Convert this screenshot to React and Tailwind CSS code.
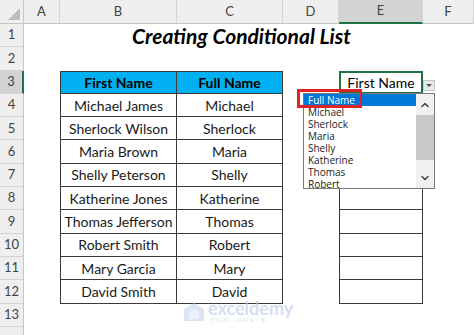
import { ChevronUp, ChevronDown } from 'lucide-react'

const people = [
  ['Michael James', 'Michael'],
  ['Sherlock Wilson', 'Sherlock'],
  ['Maria Brown', 'Maria'],
  ['Shelly Peterson', 'Shelly'],
  ['Katherine Jones', 'Katherine'],
  ['Thomas Jefferson', 'Thomas'],
  ['Robert Smith', 'Robert'],
  ['Mary Garcia', 'Mary'],
  ['David Smith', 'David'],
]

const listItems = ['Michael', 'Sherlock', 'Maria', 'Shelly', 'Katherine', 'Thomas', 'Robert']

const font = { fontFamily: 'Lato, "Open Sans", sans-serif' }

function RowHead({ n, active }) {
  return (
    <div
      className={`flex items-center justify-center border-b border-[#d4d4d4] text-[13px] text-[#444] ${
        active ? 'bg-[#d3d3d3] border-r-2 border-r-[#217346]' : 'bg-[#efefef] border-r border-r-[#c6c6c6]'
      }`}
    >
      {n}
    </div>
  )
}

export default function App() {
  return (
    <div className="relative w-[474px] h-[335px] overflow-hidden bg-white" style={font}>
      <div className="grid grid-cols-[24px_36px_117px_106px_56px_84px_1fr] grid-rows-[24px_repeat(14,23.3px)]">
        {/* column header strip */}
        <div className="relative bg-[#efefef] border-r border-b border-[#c6c6c6]">
          <div className="absolute right-[3px] bottom-[3px] w-0 h-0 border-l-[12px] border-l-transparent border-b-[12px] border-b-[#bdbdbd]" />
        </div>
        {['A', 'B', 'C', 'D', 'E', 'F'].map((c) => (
          <div
            key={c}
            className={`flex items-center justify-center text-[13px] text-[#444] border-r border-[#d4d4d4] ${
              c === 'E' ? 'bg-[#d3d3d3] border-b-2 border-b-[#217346]' : 'bg-[#efefef] border-b border-b-[#c6c6c6]'
            }`}
          >
            {c}
          </div>
        ))}

        {/* row 1: title */}
        <RowHead n={1} />
        <div />
        <div className="col-span-4 flex items-center justify-center text-[21px] font-bold italic text-black">
          Creating Conditional List
        </div>
        <div />

        {/* row 2 */}
        <RowHead n={2} />
        <div className="col-span-6" />

        {/* row 3: headers */}
        <RowHead n={3} active />
        <div />
        <div className="flex items-center justify-center bg-[#00b0f0] border border-[#3a3a3a] font-bold text-[14px] text-black">
          First Name
        </div>
        <div className="flex items-center justify-center bg-[#00b0f0] border-y border-r border-[#3a3a3a] font-bold text-[14px] text-black">
          Full Name
        </div>
        <div />
        <div className="flex items-center justify-center border-2 border-[#217346] text-[14px] text-black">
          First Name
        </div>
        <div />

        {people.map(([full, first], i) => (
          <div key={full} className="contents">
            <RowHead n={i + 4} />
            <div />
            <div className="flex items-center justify-center border-x border-b border-[#3a3a3a] text-[14px] text-[#1a1a1a]">
              {full}
            </div>
            <div className="flex items-center justify-center border-r border-b border-[#3a3a3a] text-[14px] text-[#1a1a1a]">
              {first}
            </div>
            <div />
            <div className="border-x border-b border-[#3a3a3a]" />
            <div />
          </div>
        ))}

        <RowHead n={13} />
        <div className="col-span-6" />
        <div className="bg-[#efefef] border-r border-[#c6c6c6]" />
        <div className="col-span-6" />
      </div>

      {/* dropdown arrow button */}
      <div className="absolute left-[423px] top-[80px] w-[12px] h-[11px] bg-[#e8e8e8] border border-[#c8c8c8] flex items-center justify-center">
        <div className="w-0 h-0 border-x-[3px] border-x-transparent border-t-[3px] border-t-[#555]" />
      </div>

      {/* dropdown list */}
      <div
        className="absolute left-[303px] top-[93px] w-[132px] h-[96px] bg-white border border-[#7a7a7a] flex text-[10px] leading-[12px] text-[#222]"
        style={{ fontFamily: '"Open Sans", "Noto Sans", sans-serif' }}
      >
        <div className="flex-1 flex flex-col">
          <div className="h-[12px] bg-[#0078d7] text-white pl-[4px] whitespace-nowrap">Full Name</div>
          {listItems.map((t) => (
            <div key={t} className="h-[12px] pl-[4px] whitespace-nowrap">
              {t}
            </div>
          ))}
        </div>
        <div className="w-[18px] flex flex-col items-center bg-[#f0f0f0]">
          <ChevronUp className="w-[12px] h-[12px] mt-[5px] text-[#444]" strokeWidth={3} />
          <div className="w-full h-[45px] bg-[#c8c8c8] mt-[4px]" />
          <div className="flex-1" />
          <ChevronDown className="w-[12px] h-[12px] mb-[4px] text-[#444]" strokeWidth={3} />
        </div>
      </div>

      {/* red highlight box */}
      <div className="absolute left-[297px] top-[89px] w-[65px] h-[19px] border-[3px] border-[#e02424]" />

      {/* watermark */}
      <div className="absolute left-[183px] top-[299px] flex items-center gap-[3px] opacity-60">
        <svg width="22" height="20" viewBox="0 0 22 20">
          <path d="M11 1 L21 7 L21 19 L1 19 L1 7 Z" fill="#c5d5ef" />
          <path d="M6 10 L11 7 L16 10 L16 17 L6 17 Z" fill="#dfe8f7" />
        </svg>
        <div className="flex flex-col">
          <span className="text-[18px] leading-[18px] font-bold text-[#b8caea]">exceldemy</span>
          <span className="text-[5px] leading-[7px] tracking-[1px] text-[#b8caea] pl-[3px]">EXCEL · DATA · BI</span>
        </div>
      </div>
    </div>
  )
}
